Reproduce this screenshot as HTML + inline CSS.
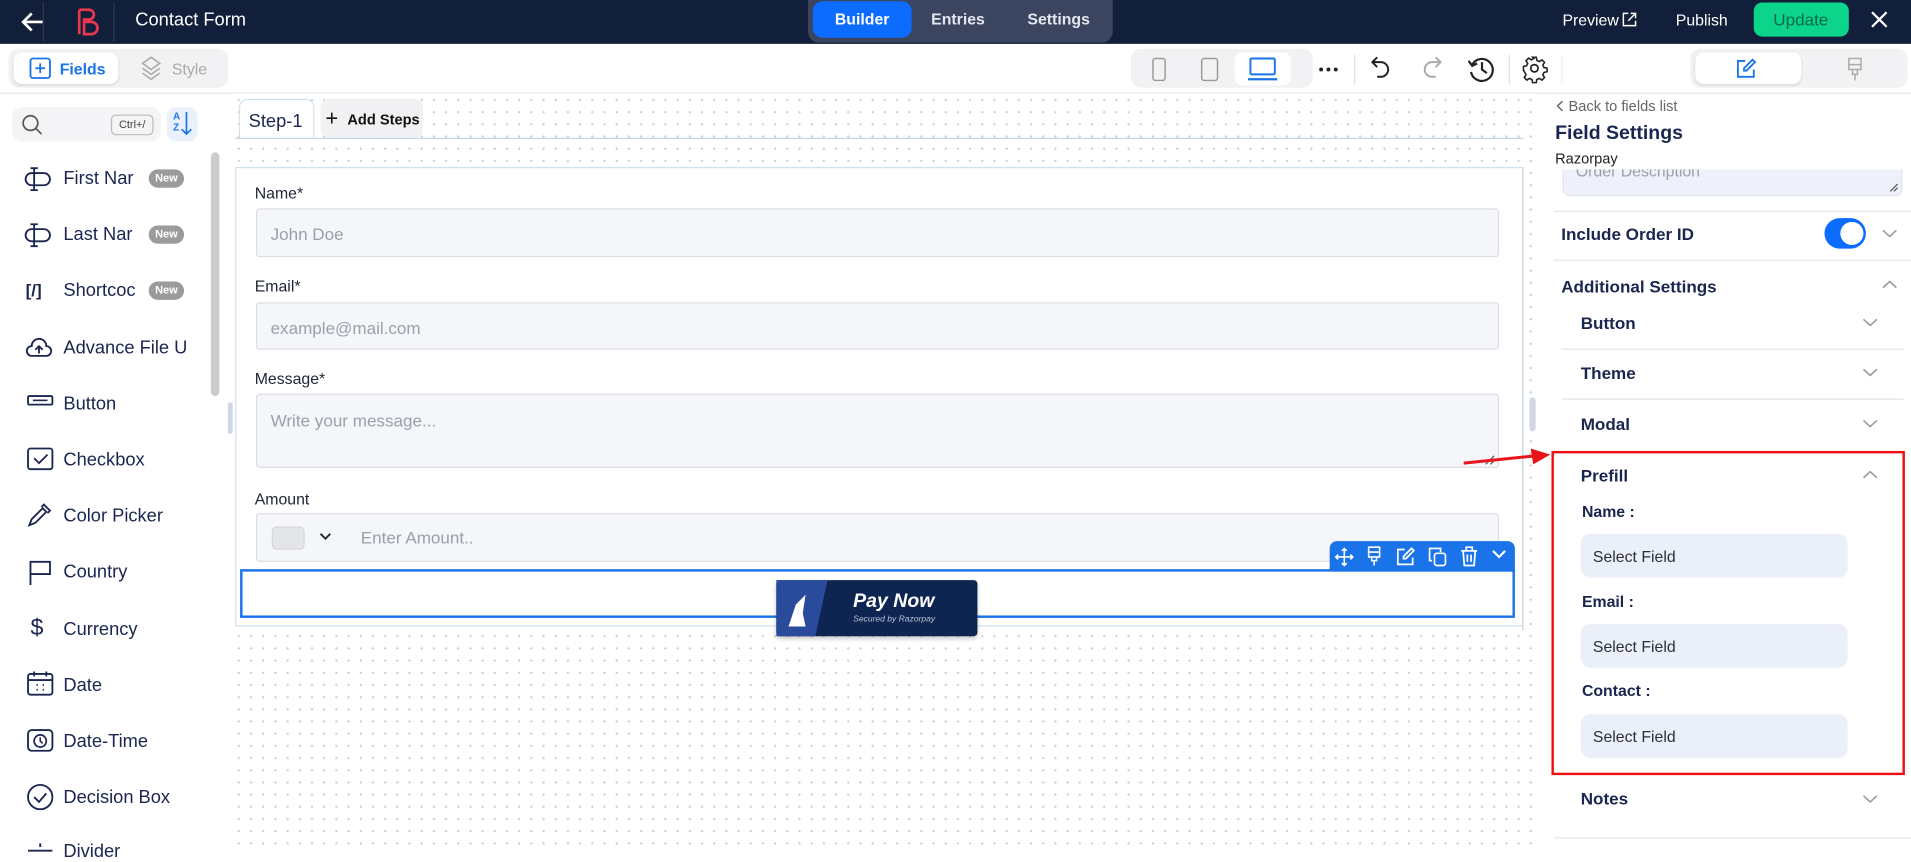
<!DOCTYPE html>
<html><head><meta charset="utf-8">
<style>
*{box-sizing:border-box;margin:0;padding:0}
html,body{width:1911px;height:852px;overflow:hidden;background:#fff;font-family:"Liberation Sans",sans-serif}
#w{position:absolute;left:0;top:0;width:1568px;height:699px;transform:scale(1.21875);transform-origin:0 0;background:#fff}
.a{position:absolute}
.t{position:absolute;white-space:nowrap}
.nav{color:#1a2550;font-size:15px}
.lbl{font-size:13px;color:#1d2433}
.inp{position:absolute;background:#f5f6f9;border:1px solid #dcdee3;border-radius:3px;color:#9aa0ab;font-size:14px;padding-left:11px}
.sec{font-size:14px;font-weight:bold;color:#1a2550}
.sel{position:absolute;left:1297px;width:219px;height:36px;background:#ebeff8;border-radius:8px;font-size:13px;color:#2a2f3a;padding:11px 0 0 10px}
.hr{position:absolute;height:1px;background:#e2e4e8}
svg{position:absolute;overflow:visible}
</style></head><body><div id="w">
<!-- top bar -->
<div class="a" style="left:0;top:0;width:1568px;height:36px;background:#121f3a"></div>
<svg style="left:17px;top:8px" width="20" height="20" viewBox="0 0 20 20"><path d="M18 10H3M9 3L2 10l7 7" stroke="#fff" stroke-width="2.2" fill="none"/></svg>
<div class="a" style="left:35px;top:2px;width:1px;height:32px;background:#2e3a55"></div>
<svg style="left:62px;top:6px" width="20" height="24" viewBox="0 0 20 24"><path d="M3 2v20M3 2h8a4 4 0 0 1 0 8H7v12h6a5 5 0 0 0 0-10H7" stroke="#e8384f" stroke-width="2.2" fill="none"/></svg>
<div class="a" style="left:93px;top:2px;width:1px;height:32px;background:#2e3a55"></div>
<div class="t" style="left:111px;top:8px;color:#fff;font-size:15px">Contact Form</div>
<div class="a" style="left:663px;top:0;width:250px;height:35px;background:#3b4560;border-radius:0 0 9px 9px"></div>
<div class="a" style="left:667px;top:1px;width:81px;height:30px;background:#0b6cff;border-radius:8px"></div>
<div class="t" style="left:685px;top:8px;color:#fff;font-size:13px;font-weight:bold">Builder</div>
<div class="t" style="left:764px;top:8px;color:#e4e7ee;font-size:13px;font-weight:bold">Entries</div>
<div class="t" style="left:843px;top:8px;color:#e4e7ee;font-size:13px;font-weight:bold">Settings</div>
<div class="t" style="left:1282px;top:9px;color:#fff;font-size:13px">Preview</div>
<svg style="left:1331px;top:10px" width="12" height="12" viewBox="0 0 12 12"><path d="M5 1H1v10h10V7M7 1h4v4M11 1L5 7" stroke="#fff" stroke-width="1.2" fill="none"/></svg>
<div class="t" style="left:1375px;top:9px;color:#fff;font-size:13px">Publish</div>
<div class="a" style="left:1439px;top:2px;width:78px;height:28px;background:#0cd48a;border-radius:7px"></div>
<div class="t" style="left:1455px;top:8px;color:#0b6b4a;font-size:14px">Update</div>
<svg style="left:1535px;top:9px" width="14" height="14" viewBox="0 0 14 14"><path d="M1 1l12 12M13 1L1 13" stroke="#fff" stroke-width="1.8"/></svg>
<!-- second bar -->
<div class="a" style="left:7px;top:40px;width:180px;height:32px;background:#f2f2f4;border-radius:8px"></div>
<div class="a" style="left:11px;top:43px;width:86px;height:26px;background:#fff;border-radius:7px;box-shadow:0 1px 2px rgba(0,0,0,.12)"></div>
<svg style="left:24px;top:47px" width="18" height="18" viewBox="0 0 18 18"><rect x="1" y="1" width="16" height="16" rx="2" stroke="#1a73e8" stroke-width="1.5" fill="none"/><path d="M9 5v8M5 9h8" stroke="#1a73e8" stroke-width="1.5"/></svg>
<div class="t" style="left:49px;top:49px;color:#1a73e8;font-size:13px;font-weight:bold">Fields</div>
<svg style="left:115px;top:46px" width="18" height="20" viewBox="0 0 18 20"><path d="M9 1l7 5-7 5-7-5zM2 10l7 5 7-5M2 14l7 5 7-5" stroke="#aaa" stroke-width="1.3" fill="none"/></svg>
<div class="t" style="left:141px;top:49px;color:#aaa;font-size:13px">Style</div>
<div class="a" style="left:928px;top:40px;width:149px;height:32px;background:#f2f2f4;border-radius:8px"></div>
<div class="a" style="left:1013px;top:43px;width:46px;height:27px;background:#fff;border-radius:6px"></div>
<svg style="left:945px;top:47px" width="12" height="20" viewBox="0 0 12 20"><rect x="1" y="1" width="10" height="18" rx="2" stroke="#999" stroke-width="1.2" fill="none"/></svg>
<svg style="left:985px;top:47px" width="15" height="20" viewBox="0 0 15 20"><rect x="1" y="1" width="13" height="18" rx="2" stroke="#999" stroke-width="1.2" fill="none"/></svg>
<svg style="left:1024px;top:47px" width="24" height="20" viewBox="0 0 24 20"><rect x="2" y="1" width="20" height="13" rx="1" stroke="#1a73e8" stroke-width="1.6" fill="none"/><path d="M0 18h24" stroke="#1a73e8" stroke-width="1.8"/></svg>
<svg style="left:1082px;top:55px" width="16" height="4" viewBox="0 0 16 4"><circle cx="2" cy="2" r="1.6" fill="#222"/><circle cx="8" cy="2" r="1.6" fill="#222"/><circle cx="14" cy="2" r="1.6" fill="#222"/></svg>
<div class="a" style="left:1111px;top:45px;width:1px;height:24px;background:#e0e0e0"></div>
<svg style="left:1124px;top:45px" width="18" height="24" viewBox="0 0 18 24"><path d="M6 2L2 6l4 4M2 6h7a6 6 0 0 1 0 12H6" stroke="#222" stroke-width="1.6" fill="none"/></svg>
<svg style="left:1166px;top:45px" width="18" height="24" viewBox="0 0 18 24"><path d="M12 2l4 4-4 4M16 6H9a6 6 0 0 0 0 12h3" stroke="#aaa" stroke-width="1.6" fill="none"/></svg>
<svg style="left:1204px;top:45px" width="24" height="24" viewBox="0 0 24 24"><path d="M4 8A9 9 0 1 1 3 14M1 5l3 4 4-2M12 6v6l4 3" stroke="#222" stroke-width="1.8" fill="none"/></svg>
<div class="a" style="left:1238px;top:45px;width:1px;height:24px;background:#e0e0e0"></div>
<svg style="left:1249px;top:46px" width="20" height="20" viewBox="0 0 20 20"><circle cx="10" cy="10" r="3" stroke="#222" stroke-width="1.4" fill="none"/><path d="M8.5 1h3l.5 2.5 2 1 2.2-1.4 2.1 2.1-1.4 2.2 1 2 2.5.5v3l-2.5.5-1 2 1.4 2.2-2.1 2.1-2.2-1.4-2 1-.5 2.5h-3l-.5-2.5-2-1-2.2 1.4-2.1-2.1 1.4-2.2-1-2L1 11.5v-3l2.5-.5 1-2-1.4-2.2 2.1-2.1 2.2 1.4 2-1z" stroke="#222" stroke-width="1.3" fill="none"/></svg>
<div class="a" style="left:1281px;top:45px;width:1px;height:24px;background:#eee"></div>
<div class="a" style="left:1387px;top:40px;width:178px;height:32px;background:#f2f2f4;border-radius:8px"></div>
<div class="a" style="left:1391px;top:43px;width:87px;height:26px;background:#fff;border-radius:7px;box-shadow:0 1px 2px rgba(0,0,0,.12)"></div>
<svg style="left:1425px;top:48px" width="16" height="16" viewBox="0 0 16 16"><path d="M7 2H1v13h13V9M13 1l2 2-7 7H6V8z" stroke="#1a73e8" stroke-width="1.5" fill="none"/></svg>
<svg style="left:1516px;top:47px" width="12" height="20" viewBox="0 0 12 20"><path d="M1 1h10v9H1zM1 6h10M4 10v4h4v-4M6 14v5" stroke="#aaa" stroke-width="1.2" fill="none"/></svg>
<div class="hr" style="left:0;top:76px;width:1568px;background:#e8e8ea"></div>
<!-- left sidebar -->
<div class="a" style="left:10px;top:88px;width:122px;height:28px;background:#f4f4f6;border-radius:8px"></div>
<svg style="left:17px;top:93px" width="18" height="18" viewBox="0 0 18 18"><circle cx="8" cy="8" r="6" stroke="#555" stroke-width="1.4" fill="none"/><path d="M12.5 12.5L17 17" stroke="#555" stroke-width="1.4"/></svg>
<div class="a" style="left:91px;top:94px;width:35px;height:17px;border:1px solid #bbb;border-radius:4px;font-size:9px;color:#444;text-align:center;line-height:15px">Ctrl+/</div>
<div class="a" style="left:137px;top:88px;width:25px;height:28px;background:#eaf1fd;border-radius:7px"></div>
<div class="t" style="left:142px;top:91px;font-size:8px;color:#1a73e8;line-height:9px;font-weight:bold">A<br>Z</div>
<svg style="left:149px;top:92px" width="8" height="20" viewBox="0 0 8 20"><path d="M4 0v18M0 14l4 4 4-4" stroke="#1a73e8" stroke-width="1.4" fill="none"/></svg>
<div class="a" style="left:173px;top:125px;width:7px;height:200px;background:#ccc;border-radius:4px"></div>
<div class="a" style="left:187px;top:330px;width:4px;height:26px;background:#cfd6e4;border-radius:2px"></div>

<svg style="left:20px;top:137px" width="22" height="20" viewBox="0 0 22 20"><rect x="1" y="5" width="20" height="10" rx="5" stroke="#1a2550" stroke-width="1.5" fill="none"/><path d="M8 1v18M5 1h6M5 19h6" stroke="#1a2550" stroke-width="1.5"/></svg>
<div class="t nav" style="left:52px;top:138px">First Nar</div>
<div class="a" style="left:122px;top:139px;width:29px;height:15px;background:#9b9b9b;border-radius:8px;color:#fff;font-size:9px;font-weight:bold;text-align:center;line-height:15px">New</div>
<svg style="left:20px;top:183px" width="22" height="20" viewBox="0 0 22 20"><rect x="1" y="5" width="20" height="10" rx="5" stroke="#1a2550" stroke-width="1.5" fill="none"/><path d="M8 1v18M5 1h6M5 19h6" stroke="#1a2550" stroke-width="1.5"/></svg>
<div class="t nav" style="left:52px;top:184px">Last Nar</div>
<div class="a" style="left:122px;top:185px;width:29px;height:15px;background:#9b9b9b;border-radius:8px;color:#fff;font-size:9px;font-weight:bold;text-align:center;line-height:15px">New</div>
<div class="t nav" style="left:21px;top:230px;font-weight:bold;font-size:14px">[/]</div>
<div class="t nav" style="left:52px;top:230px">Shortcoc</div>
<div class="a" style="left:122px;top:231px;width:29px;height:15px;background:#9b9b9b;border-radius:8px;color:#fff;font-size:9px;font-weight:bold;text-align:center;line-height:15px">New</div>
<svg style="left:21px;top:276px" width="22" height="18" viewBox="0 0 22 18"><path d="M6 16H5a4 4 0 0 1 0-8 6 6 0 0 1 12 0 4 4 0 0 1 0 8H6z" stroke="#1a2550" stroke-width="1.5" fill="none"/><path d="M11 14V8M8 11l3-3 3 3" stroke="#1a2550" stroke-width="1.5" fill="none"/></svg>
<div class="t nav" style="left:52px;top:277px">Advance File U</div>
<svg style="left:22px;top:324px" width="22" height="10" viewBox="0 0 22 10"><rect x="1" y="1" width="20" height="7" rx="1" stroke="#1a2550" stroke-width="1.5" fill="none"/><path d="M5 4.5h12" stroke="#1a2550" stroke-width="1.3"/></svg>
<div class="t nav" style="left:52px;top:323px">Button</div>
<svg style="left:22px;top:367px" width="22" height="20" viewBox="0 0 22 20"><rect x="1" y="1" width="20" height="17" rx="2" stroke="#1a2550" stroke-width="1.5" fill="none"/><path d="M6 9l4 4 7-7" stroke="#1a2550" stroke-width="1.5" fill="none"/></svg>
<div class="t nav" style="left:52px;top:369px">Checkbox</div>
<svg style="left:22px;top:413px" width="20" height="20" viewBox="0 0 20 20"><path d="M2 18l2-5 9-9 3 3-9 9zM12 3l2-2 5 5-2 2" stroke="#1a2550" stroke-width="1.5" fill="none"/></svg>
<div class="t nav" style="left:52px;top:415px">Color Picker</div>
<svg style="left:23px;top:459px" width="20" height="22" viewBox="0 0 20 22"><path d="M2 21V2h16v10H2" stroke="#1a2550" stroke-width="1.5" fill="none"/></svg>
<div class="t nav" style="left:52px;top:461px">Country</div>
<div class="t nav" style="left:25px;top:505px;font-size:19px">$</div>
<div class="t nav" style="left:52px;top:508px">Currency</div>
<svg style="left:22px;top:551px" width="22" height="20" viewBox="0 0 22 20"><rect x="1" y="2" width="20" height="17" rx="2" stroke="#1a2550" stroke-width="1.5" fill="none"/><path d="M1 7h20M6 0v4M16 0v4M8 11h1M13 11h1M8 15h1M13 15h1" stroke="#1a2550" stroke-width="1.5"/></svg>
<div class="t nav" style="left:52px;top:554px">Date</div>
<svg style="left:22px;top:597px" width="22" height="20" viewBox="0 0 22 20"><rect x="1" y="2" width="20" height="17" rx="3" stroke="#1a2550" stroke-width="1.5" fill="none"/><circle cx="11" cy="11" r="5" stroke="#1a2550" stroke-width="1.4" fill="none"/><path d="M11 8v3l2 2" stroke="#1a2550" stroke-width="1.3" fill="none"/></svg>
<div class="t nav" style="left:52px;top:600px">Date-Time</div>
<svg style="left:22px;top:643px" width="22" height="22" viewBox="0 0 22 22"><circle cx="11" cy="11" r="10" stroke="#1a2550" stroke-width="1.5" fill="none"/><path d="M6 11l4 4 6-7" stroke="#1a2550" stroke-width="1.5" fill="none"/></svg>
<div class="t nav" style="left:52px;top:646px">Decision Box</div>
<svg style="left:22px;top:692px" width="22" height="10" viewBox="0 0 22 10"><path d="M11 0v3M1 6h20" stroke="#1a2550" stroke-width="1.6"/></svg>
<div class="t nav" style="left:52px;top:690px">Divider</div>
<!-- canvas -->
<div class="a" style="left:191px;top:77px;width:1070px;height:622px;background-color:#fff;background-image:radial-gradient(#c9ccd2 0.8px,transparent 1px);background-size:10px 10px"></div>
<div class="a" style="left:196px;top:81px;width:62px;height:33px;background:#fff;border:1px solid #cfe3ef;border-bottom:none;border-radius:7px 7px 0 0"></div>
<div class="t" style="left:204px;top:91px;font-size:15px;color:#1a2550">Step-1</div>
<div class="a" style="left:263px;top:81px;width:84px;height:32px;background:#f1f1f3;border-radius:7px"></div>
<div class="t" style="left:267px;top:87px;font-size:18px;color:#111">+</div>
<div class="t" style="left:285px;top:91px;font-size:12px;color:#111;font-weight:bold">Add Steps</div>
<div class="hr" style="left:193px;top:113px;width:1057px;background:#c3d8e2"></div>
<div class="a" style="left:193px;top:137px;width:1057px;height:377px;background:#fff;border:1px solid #cfe0ea"></div>
<div class="a" style="left:1249px;top:137px;width:1px;height:380px;background:#c3d8e2"></div>
<div class="a" style="left:1255px;top:326px;width:5px;height:28px;background:#cfd6e4;border-radius:3px"></div>
<div class="t lbl" style="left:209px;top:151px">Name*</div>
<div class="inp" style="left:210px;top:171px;width:1020px;height:40px;padding-top:12px">John Doe</div>
<div class="t lbl" style="left:209px;top:227px">Email*</div>
<div class="inp" style="left:210px;top:248px;width:1020px;height:39px;padding-top:12px">example@mail.com</div>
<div class="t lbl" style="left:209px;top:303px">Message*</div>
<div class="inp" style="left:210px;top:323px;width:1020px;height:61px;padding-top:13px">Write your message...</div>
<svg style="left:1218px;top:373px" width="9" height="9" viewBox="0 0 9 9"><path d="M1 8L8 1M5 8L8 5" stroke="#555" stroke-width="1"/></svg>
<div class="t lbl" style="left:209px;top:402px">Amount</div>
<div class="inp" style="left:210px;top:421px;width:1020px;height:40px"></div>
<div class="a" style="left:223px;top:432px;width:27px;height:19px;background:#e4e5e8;border:1px solid #d6d7da;border-radius:4px"></div>
<svg style="left:262px;top:437px" width="10" height="7" viewBox="0 0 10 7"><path d="M1 1l4 4 4-4" stroke="#1d2433" stroke-width="1.5" fill="none"/></svg>
<div class="t" style="left:296px;top:433px;font-size:14px;color:#9aa0ab">Enter Amount..</div>
<div class="a" style="left:197px;top:467px;width:1046px;height:40px;background:#fff;border:2px solid #1a73e8"></div>
<div class="a" style="left:1091px;top:444px;width:152px;height:25px;background:#1a73e8;border-radius:6px 6px 0 0"></div>
<svg style="left:1095px;top:449px" width="16" height="16" viewBox="0 0 16 16"><path d="M8 1v14M1 8h14M6 3l2-2 2 2M6 13l2 2 2-2M3 6L1 8l2 2M13 6l2 2-2 2" stroke="#fff" stroke-width="1.3" fill="none"/></svg>
<svg style="left:1122px;top:448px" width="11" height="17" viewBox="0 0 11 17"><path d="M1 1h9v8H1zM1 5h9M3.5 9v3h4V9M5.5 12v4" stroke="#fff" stroke-width="1.3" fill="none"/></svg>
<svg style="left:1146px;top:449px" width="15" height="15" viewBox="0 0 16 16"><path d="M7 2H1v13h13V9M13 1l2 2-7 7H6V8z" stroke="#fff" stroke-width="1.5" fill="none"/></svg>
<svg style="left:1172px;top:449px" width="15" height="16" viewBox="0 0 15 16"><rect x="5" y="5" width="9" height="10" rx="2" stroke="#fff" stroke-width="1.4" fill="none"/><path d="M3 11H1V1h9v3" stroke="#fff" stroke-width="1.4" fill="none"/></svg>
<svg style="left:1198px;top:448px" width="15" height="17" viewBox="0 0 15 17"><path d="M1 4h13M5 4V1h5v3M2.5 4l1 12h8l1-12M6 7v6M9 7v6" stroke="#fff" stroke-width="1.4" fill="none"/></svg>
<svg style="left:1224px;top:451px" width="12" height="8" viewBox="0 0 12 8"><path d="M1 1l5 5 5-5" stroke="#fff" stroke-width="1.8" fill="none"/></svg>
<div class="a" style="left:637px;top:476px;width:165px;height:46px;background:#0d2550;border-radius:3px;overflow:hidden;box-shadow:0 2px 4px rgba(0,0,0,.2)"></div>
<svg style="left:637px;top:476px" width="44" height="46" viewBox="0 0 44 46"><path d="M0 0h42l-10 46H0z" fill="#2a4a9c"/><path d="M10 38l6-18 8-8-4 26zM18 38l3-14 3 14z" fill="#fff"/></svg>
<div class="t" style="left:700px;top:485px;color:#fff;font-size:16px;font-weight:bold;font-style:italic">Pay Now</div>
<div class="t" style="left:700px;top:505px;color:#b7c2d8;font-size:7px;font-style:italic">Secured by Razorpay</div>
<!-- arrow -->
<svg style="left:1200px;top:368px" width="75" height="18" viewBox="0 0 75 18"><path d="M1 12L60 6" stroke="#e8141c" stroke-width="2.5"/><path d="M72 5L56 0l2 13z" fill="#e8141c"/></svg>
<!-- right panel -->
<svg style="left:1276px;top:82px" width="7" height="10" viewBox="0 0 7 10"><path d="M6 1L2 5l4 4" stroke="#666" stroke-width="1.2" fill="none"/></svg>
<div class="t" style="left:1287px;top:80px;font-size:12px;color:#666">Back to fields list</div>
<div class="t" style="left:1276px;top:101px;font-size:16px;color:#1a2550;font-weight:bold">Field Settings</div>
<div class="a" style="left:1282px;top:128px;width:279px;height:33px;background:#eef1fa;border:1px solid #e0e4ee;border-radius:6px"></div>
<div class="t" style="left:1293px;top:133px;font-size:13px;color:#9aa0ab">Order Description</div>
<div class="a" style="left:1270px;top:120px;width:298px;height:19px;background:#fff"></div>
<div class="t" style="left:1276px;top:123px;font-size:12px;color:#222">Razorpay</div>
<svg style="left:1550px;top:150px" width="8" height="8" viewBox="0 0 8 8"><path d="M1 7L7 1M4 7L7 4" stroke="#555" stroke-width="1"/></svg>
<div class="hr" style="left:1275px;top:173px;width:293px"></div>
<div class="t sec" style="left:1281px;top:184px">Include Order ID</div>
<div class="a" style="left:1497px;top:179px;width:34px;height:25px;background:#0b6cff;border-radius:13px"></div>
<div class="a" style="left:1510px;top:182px;width:19px;height:19px;background:#fff;border-radius:50%"></div>
<svg style="left:1544px;top:188px" width="13" height="7" viewBox="0 0 13 7"><path d="M1 1l5.5 5 5.5-5" stroke="#999" stroke-width="1.3" fill="none"/></svg>
<div class="hr" style="left:1275px;top:213px;width:293px"></div>
<div class="t sec" style="left:1281px;top:227px">Additional Settings</div>
<svg style="left:1544px;top:230px" width="13" height="7" viewBox="0 0 13 7"><path d="M1 6l5.5-5 5.5 5" stroke="#999" stroke-width="1.3" fill="none"/></svg>
<div class="t sec" style="left:1297px;top:257px">Button</div>
<svg style="left:1528px;top:261px" width="13" height="7" viewBox="0 0 13 7"><path d="M1 1l5.5 5 5.5-5" stroke="#999" stroke-width="1.3" fill="none"/></svg>
<div class="hr" style="left:1281px;top:286px;width:281px"></div>
<div class="t sec" style="left:1297px;top:298px">Theme</div>
<svg style="left:1528px;top:302px" width="13" height="7" viewBox="0 0 13 7"><path d="M1 1l5.5 5 5.5-5" stroke="#999" stroke-width="1.3" fill="none"/></svg>
<div class="hr" style="left:1281px;top:327px;width:281px"></div>
<div class="t sec" style="left:1297px;top:340px">Modal</div>
<svg style="left:1528px;top:344px" width="13" height="7" viewBox="0 0 13 7"><path d="M1 1l5.5 5 5.5-5" stroke="#999" stroke-width="1.3" fill="none"/></svg>
<div class="a" style="left:1273px;top:370px;width:290px;height:266px;border:2px solid #ee0f14"></div>
<div class="t sec" style="left:1297px;top:382px">Prefill</div>
<svg style="left:1528px;top:386px" width="13" height="7" viewBox="0 0 13 7"><path d="M1 6l5.5-5 5.5 5" stroke="#999" stroke-width="1.3" fill="none"/></svg>
<div class="t sec" style="left:1298px;top:412px;font-size:13px">Name :</div>
<div class="sel" style="top:438px">Select Field</div>
<div class="t sec" style="left:1298px;top:486px;font-size:13px">Email :</div>
<div class="sel" style="top:512px">Select Field</div>
<div class="t sec" style="left:1298px;top:559px;font-size:13px">Contact :</div>
<div class="sel" style="top:586px">Select Field</div>
<div class="t sec" style="left:1297px;top:647px">Notes</div>
<svg style="left:1528px;top:652px" width="13" height="7" viewBox="0 0 13 7"><path d="M1 1l5.5 5 5.5-5" stroke="#999" stroke-width="1.3" fill="none"/></svg>
<div class="hr" style="left:1275px;top:687px;width:293px"></div>
</div></body></html>
